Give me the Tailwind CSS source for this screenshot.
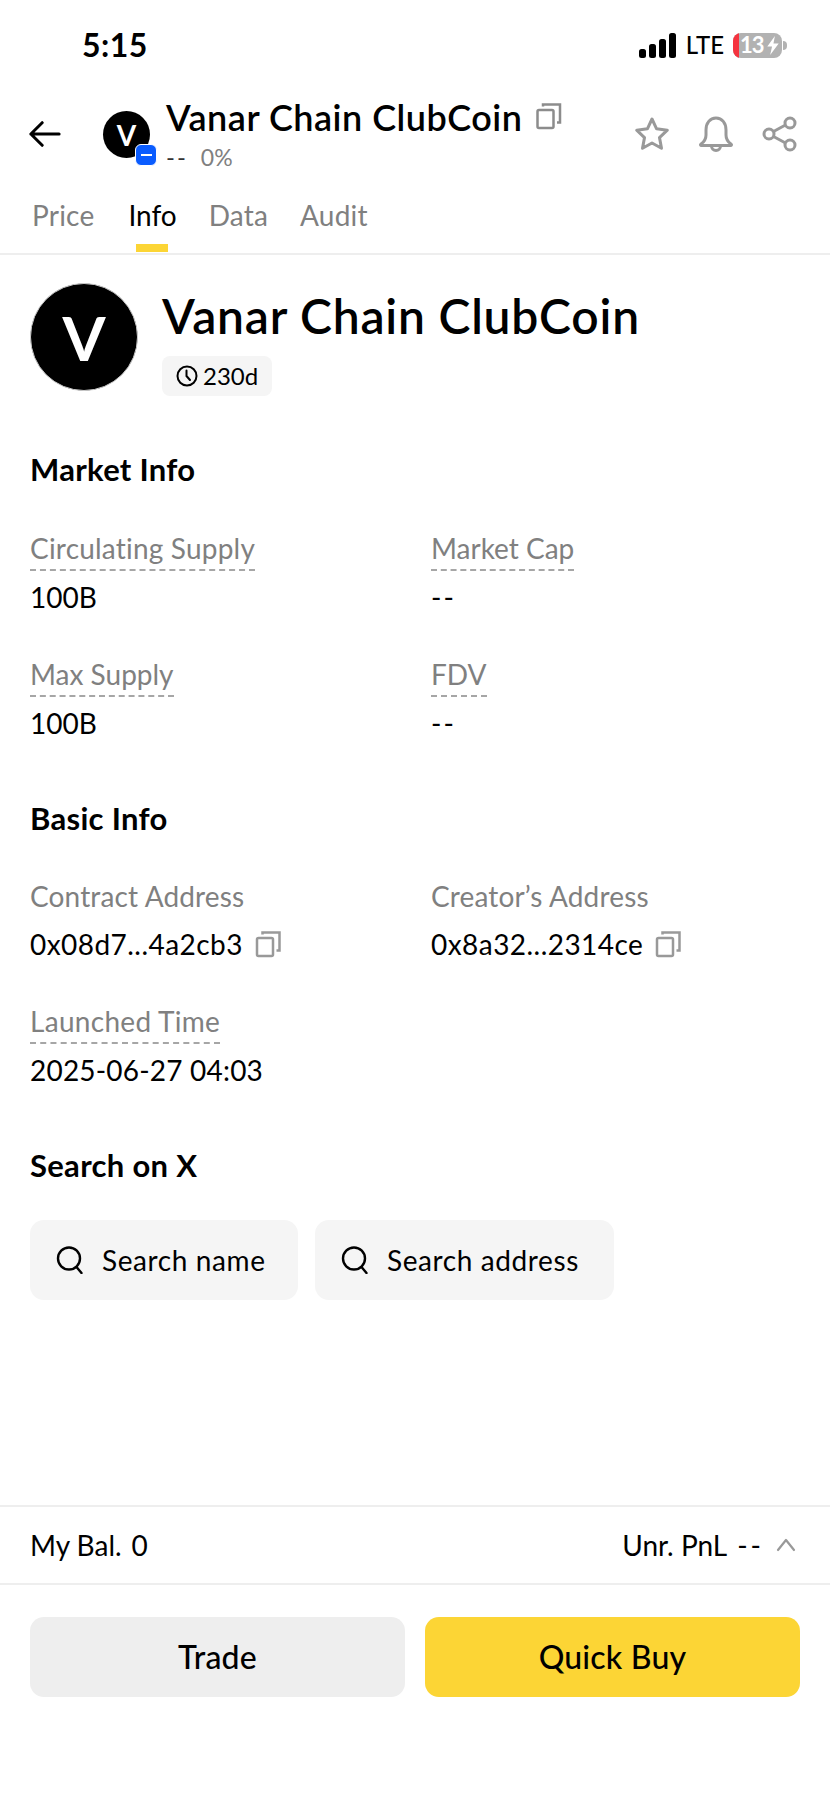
<!DOCTYPE html>
<html lang="en">
<head>
  <meta charset="UTF-8" />
  <title>Vanar Chain ClubCoin</title>
  <script src="https://cdn.jsdelivr.net/npm/@tailwindcss/browser@4"></script>
</head>
<body class="bg-white text-black font-['Lato','Liberation_Sans',sans-serif]">
  <div class="w-[830px] h-[1796px] flex flex-col overflow-hidden">

    <!-- Status bar -->
    <div class="h-[90px] shrink-0 flex items-center pl-[82px] pr-[43px]">
      <span class="text-[32px] leading-none font-bold tracking-[0.5px]">5:15</span>
      <div class="ml-auto flex items-center">
        <svg width="38" height="25" viewBox="0 0 38 25" fill="#000">
          <rect x="0" y="16" width="7" height="9" rx="2.5" /><rect x="10" y="11" width="7" height="14" rx="2.5" />
          <rect x="20" y="6" width="7" height="19" rx="2.5" /><rect x="30" y="0" width="7" height="25" rx="2.5" />
        </svg>
        <span class="ml-[9px] text-[24px] leading-none font-medium">LTE</span>
        <div class="ml-[9px] w-[49px] h-[25px] rounded-[8px] bg-[#b2b2b2] overflow-hidden flex items-center">
          <div class="w-[6px] h-full shrink-0 bg-[#f5333f]"></div>
          <span class="ml-[1px] text-white text-[22px] font-bold leading-none tracking-[-1px]">13</span>
          <svg class="ml-[3px] shrink-0" width="12" height="19" viewBox="0 0 12 20" fill="#fff"><path d="M8 0 0 11h5l-2 9 9-12H6.500z" /></svg>
        </div>
        <div class="w-[4px] h-[9px] ml-[1px] rounded-r-full bg-[#b2b2b2]"></div>
      </div>
    </div>

    <!-- Header -->
    <div class="h-[86px] shrink-0 flex items-start">
      <svg class="ml-[29px] mt-[29px]" width="32" height="30" viewBox="0 0 34 30" fill="none" stroke="#000" stroke-width="3.200" stroke-linecap="round" stroke-linejoin="round"><path d="M2 15h30M14 3 2 15l12 12" /></svg>
      <div class="ml-[42px] mt-[21px] relative w-[47px] h-[47px] rounded-full bg-black flex items-center justify-center">
        <span class="text-white text-[28px] font-bold leading-none">V</span>
        <div class="absolute left-[32px] top-[33px] w-[22px] h-[22px] rounded-[6px] bg-[#0a5cff] border-[1px] border-white flex items-center justify-center">
          <div class="w-[11px] h-[2px] bg-white"></div>
        </div>
      </div>
      <div class="ml-[16px] mt-[4px]">
        <div class="flex items-center h-[46px]">
          <span class="text-[36px] leading-none font-semibold tracking-[0.5px]">Vanar Chain ClubCoin</span>
          <svg class="ml-[14px] -mt-[1px]" width="26" height="27" viewBox="0 0 26 27" fill="none" stroke="#8c8c8c" stroke-width="2.500"><rect x="1.500" y="7" width="16" height="18" rx="1.500" /><path d="M7 3.500V1.500h17v18h-3" /></svg>
        </div>
        <div class="flex items-center h-[28px] mt-[3px]">
          <span class="text-[24px] leading-none text-[#333] tracking-[2px]">--</span>
          <span class="ml-[13px] text-[23px] leading-none text-[#808080]">0%</span>
        </div>
      </div>
      <div class="ml-auto mr-[32px] mt-[26px] flex items-start gap-[28px]">
        <svg width="36" height="36" viewBox="0 0 36 36" fill="none" stroke="#999" stroke-width="3" stroke-linejoin="round"><path d="m18 3 4.600 9.800 10.700 1.400-7.800 7.400 2 10.600-9.500-5.200-9.500 5.200 2-10.600-7.800-7.400 10.700-1.400z" /></svg>
        <svg width="36" height="36" viewBox="0 0 36 36" fill="none" stroke="#999" stroke-width="3" stroke-linejoin="round" stroke-linecap="round"><path d="M3 28c3-2 5-5 5-9v-5C8 7 12 2 18 2s10 5 10 12v5c0 4 2 7 5 9 1 .5.500 1.500-.5 1.500H3.500C2.500 29.500 2 28.500 3 28z" /><path d="M13.500 30a4.500 4.500 0 0 0 9 0" /></svg>
        <svg width="36" height="36" viewBox="0 0 36 36" fill="none" stroke="#999" stroke-width="3"><circle cx="7" cy="18" r="5" /><circle cx="28" cy="7" r="5" /><circle cx="28" cy="29" r="5" /><path d="m11.500 15.500 12-6.500M11.500 20.500l12 6.500" /></svg>
      </div>
    </div>

    <!-- Tabs -->
    <div class="h-[79px] shrink-0 border-b-2 border-[#eeeeee] flex items-start pl-[32px] gap-[32px] text-[28px] leading-none tracking-[0.2px] text-[#808080] pt-[25px]">
      <span class="mr-[2px]">Price</span>
      <div class="relative text-black tracking-normal">
        <span>Info</span>
        <div class="absolute left-[8px] top-[43px] w-[32px] h-[8px] bg-[#fcd535]"></div>
      </div>
      <span>Data</span>
      <span>Audit</span>
    </div>

    <!-- Token title -->
    <div class="flex items-start pl-[30px] pt-[28px] h-[196px] shrink-0">
      <div class="w-[108px] h-[108px] rounded-full bg-black border-[1px] border-[#ccc] flex items-center justify-center">
        <span class="text-white text-[62px] font-bold leading-none">V</span>
      </div>
      <div class="ml-[24px]">
        <h1 class="text-[48px] leading-none font-semibold h-[62px] pt-[9px] tracking-[0.8px]">Vanar Chain ClubCoin</h1>
        <div class="mt-[11px] inline-flex items-center h-[40px] px-[14px] bg-[#f5f5f5] rounded-[8px] text-[24px]">
          <svg width="22" height="22" viewBox="0 0 22 22" fill="none" stroke="#000" stroke-width="2" stroke-linecap="round"><circle cx="11" cy="11" r="9.500" /><path d="M10.500 5.500V11l3.500 4" /></svg>
          <span class="ml-[5px] leading-none">230d</span>
        </div>
      </div>
    </div>

    <!-- Market info -->
    <h2 class="pl-[30px] h-[36px] shrink-0 text-[31px] leading-[36px] font-bold tracking-[0.3px]">Market Info</h2>
    <div class="pt-[43px] pl-[30px] grid grid-cols-[401px_1fr] gap-y-[43px] text-[28px] leading-none">
      <div>
        <div class="inline-block h-[41px] pt-[4px] border-b-2 border-dashed border-[#a6a6a6] text-[#808080] tracking-[0.2px]">Circulating Supply</div>
        <div class="mt-[12px] h-[30px]">100B</div>
      </div>
      <div>
        <div class="inline-block h-[41px] pt-[4px] border-b-2 border-dashed border-[#a6a6a6] text-[#808080]">Market Cap</div>
        <div class="mt-[12px] h-[30px] tracking-[2px]">--</div>
      </div>
      <div>
        <div class="inline-block h-[41px] pt-[4px] border-b-2 border-dashed border-[#a6a6a6] text-[#808080]">Max Supply</div>
        <div class="mt-[12px] h-[30px]">100B</div>
      </div>
      <div>
        <div class="inline-block h-[41px] pt-[4px] border-b-2 border-dashed border-[#a6a6a6] text-[#808080]">FDV</div>
        <div class="mt-[12px] h-[30px] tracking-[2px]">--</div>
      </div>
    </div>

    <!-- Basic info -->
    <h2 class="pl-[30px] mt-[61px] h-[36px] shrink-0 text-[31px] leading-[36px] font-bold tracking-[0.3px]">Basic Info</h2>
    <div class="pt-[46px] pl-[30px] grid grid-cols-[401px_1fr] text-[28px] leading-none">
      <div>
        <div class="h-[30px] text-[#808080] tracking-[0.15px]">Contract Address</div>
        <div class="mt-[17px] h-[30px] flex items-center">
          <span class="tracking-[0.45px]">0x08d7...4a2cb3</span>
          <svg class="ml-[12px]" width="27" height="27" viewBox="0 0 26 27" fill="none" stroke="#999" stroke-width="2.500"><rect x="1.500" y="7" width="16" height="18" rx="1.500" /><path d="M7 3.500V1.500h17v18h-3" /></svg>
        </div>
      </div>
      <div>
        <div class="h-[30px] text-[#808080] tracking-[0.15px]">Creator’s Address</div>
        <div class="mt-[17px] h-[30px] flex items-center">
          <span class="tracking-[0.45px]">0x8a32...2314ce</span>
          <svg class="ml-[12px]" width="27" height="27" viewBox="0 0 26 27" fill="none" stroke="#999" stroke-width="2.500"><rect x="1.500" y="7" width="16" height="18" rx="1.500" /><path d="M7 3.500V1.500h17v18h-3" /></svg>
        </div>
      </div>
      <div class="mt-[44px]">
        <div class="inline-block h-[41px] pt-[4px] border-b-2 border-dashed border-[#a6a6a6] text-[#808080] tracking-[0.3px]">Launched Time</div>
        <div class="mt-[12px] h-[30px] tracking-[0.2px]">2025-06-27 04:03</div>
      </div>
    </div>

    <!-- Search on X -->
    <h2 class="pl-[30px] mt-[61px] h-[36px] shrink-0 text-[31px] leading-[36px] font-bold tracking-[0.3px]">Search on X</h2>
    <div class="mt-[37px] pl-[30px] flex gap-[17px] text-[28px] leading-none tracking-[0.6px]">
      <div class="w-[268px] h-[80px] rounded-[14px] bg-[#f5f5f5] flex items-center pl-[26px]">
        <svg width="28" height="28" viewBox="0 0 28 28" fill="none" stroke="#000" stroke-width="2.400" stroke-linecap="round"><circle cx="13" cy="12.500" r="11" /><path d="m20.500 21 5 6" /></svg>
        <span class="ml-[18px]">Search name</span>
      </div>
      <div class="w-[299px] h-[80px] rounded-[14px] bg-[#f5f5f5] flex items-center pl-[26px]">
        <svg width="28" height="28" viewBox="0 0 28 28" fill="none" stroke="#000" stroke-width="2.400" stroke-linecap="round"><circle cx="13" cy="12.500" r="11" /><path d="m20.500 21 5 6" /></svg>
        <span class="ml-[18px]">Search address</span>
      </div>
    </div>

    <!-- Balance row -->
    <div class="mt-auto h-[80px] shrink-0 border-y-2 border-[#eeeeee] flex items-center px-[30px] text-[28px] leading-none">
      <span>My Bal.</span>
      <span class="ml-[10px]">0</span>
      <span class="ml-auto">Unr. PnL</span>
      <span class="ml-[10px] tracking-[3px]">--</span>
      <svg class="ml-[12px] mr-[4px]" width="20" height="14" viewBox="0 0 20 14" fill="none" stroke="#999" stroke-width="2.200" stroke-linecap="round" stroke-linejoin="round"><path d="m2 12 8-10 8 10" /></svg>
    </div>

    <!-- Actions -->
    <div class="h-[211px] shrink-0 pt-[32px] px-[30px] flex items-start gap-[20px] text-[32px] leading-none font-medium tracking-[0.2px]">
      <div class="w-[375px] h-[80px] rounded-[14px] bg-[#eeeeee] flex items-center justify-center">Trade</div>
      <div class="w-[375px] h-[80px] rounded-[14px] bg-[#fcd535] flex items-center justify-center">Quick Buy</div>
    </div>
  </div>
</body>
</html>
